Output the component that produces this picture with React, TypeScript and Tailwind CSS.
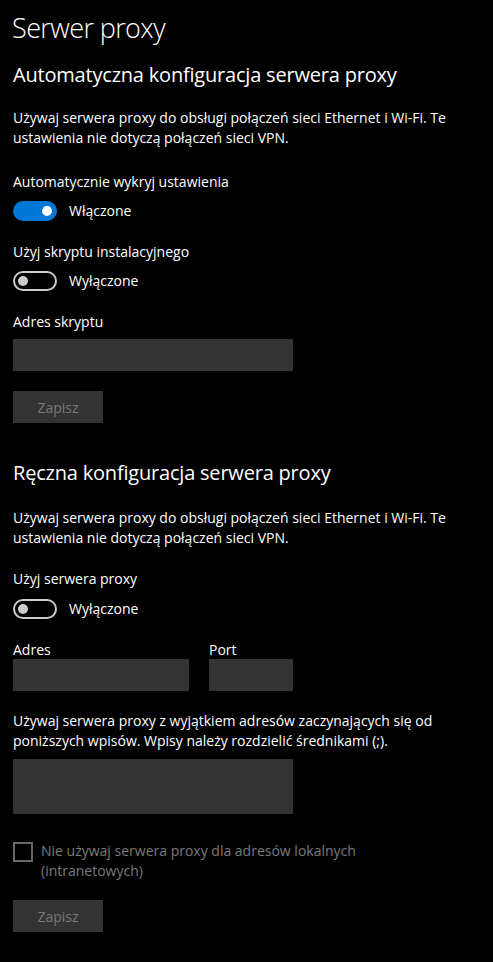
import React from 'react'

const font = { fontFamily: '"Open Sans", "Noto Sans", sans-serif' }

function Toggle({ on, label, className }: { on: boolean; label: string; className?: string }) {
    return (
        <div className={`flex items-center gap-3 h-5 ${className ?? ''}`}>
            {on ? (
                <div className="w-11 h-5 rounded-full bg-[#0078d7] flex items-center justify-end pr-[5px]">
                    <div className="w-[10px] h-[10px] rounded-full bg-white" />
                </div>
            ) : (
                <div className="w-11 h-5 rounded-full border-2 border-[#cccccc] flex items-center pl-[3px]">
                    <div className="w-[10px] h-[10px] rounded-full bg-[#cccccc]" />
                </div>
            )}
            <span className="text-[14px] leading-5 text-white">{label}</span>
        </div>
    )
}

function SaveButton({ className }: { className?: string }) {
    return (
        <div className={`w-[90px] h-8 bg-[#333333] flex items-center justify-center text-[14px] text-[#7a7a7a] ${className ?? ''}`}>
            Zapisz
        </div>
    )
}

export default function App() {
    return (
        <div className="w-[493px] h-[962px] bg-black text-white px-[13px] overflow-hidden" style={font}>
            <h1 className="pt-2 text-[27px] leading-10 font-light tracking-[-0.6px] -ml-px">Serwer proxy</h1>

            <h2 className="mt-[13px] text-[20px] leading-7 tracking-[-0.2px]">Automatyczna konfiguracja serwera proxy</h2>
            <p className="mt-[19px] text-[14px] leading-5 w-[460px]">
                Używaj serwera proxy do obsługi połączeń sieci Ethernet i Wi-Fi. Te ustawienia nie dotyczą połączeń sieci VPN.
            </p>

            <div className="mt-6 text-[14px] leading-5">Automatycznie wykryj ustawienia</div>
            <Toggle on label="Włączone" className="mt-[9px]" />

            <div className="mt-[21px] text-[14px] leading-5">Użyj skryptu instalacyjnego</div>
            <Toggle on={false} label="Wyłączone" className="mt-[9px]" />

            <div className="mt-[21px] text-[14px] leading-5">Adres skryptu</div>
            <div className="mt-[7px] w-[280px] h-8 bg-[#333333]" />
            <SaveButton className="mt-5" />

            <h2 className="mt-9 text-[20px] leading-7 tracking-[-0.2px]">Ręczna konfiguracja serwera proxy</h2>
            <p className="mt-[21px] text-[14px] leading-5 w-[460px]">
                Używaj serwera proxy do obsługi połączeń sieci Ethernet i Wi-Fi. Te ustawienia nie dotyczą połączeń sieci VPN.
            </p>

            <div className="mt-[21px] text-[14px] leading-5">Użyj serwera proxy</div>
            <Toggle on={false} label="Wyłączone" className="mt-[10px]" />

            <div className="mt-[22px] flex gap-5">
                <div className="flex flex-col">
                    <span className="text-[14px] leading-[18px]">Adres</span>
                    <div className="w-[176px] h-8 bg-[#333333]" />
                </div>
                <div className="flex flex-col">
                    <span className="text-[14px] leading-[18px]">Port</span>
                    <div className="w-[84px] h-8 bg-[#333333]" />
                </div>
            </div>

            <p className="mt-5 text-[14px] leading-5 w-[460px]">
                Używaj serwera proxy z wyjątkiem adresów zaczynających się od poniższych wpisów. Wpisy należy rozdzielić średnikami (;).
            </p>
            <div className="mt-2 w-[280px] h-[55px] bg-[#333333]" />

            <div className="mt-[27px] flex items-start gap-2">
                <div className="mt-px w-5 h-5 border-2 border-[#666666] shrink-0" />
                <span className="text-[14px] leading-5 text-[#7a7a7a] w-[380px]">
                    Nie używaj serwera proxy dla adresów lokalnych (intranetowych)
                </span>
            </div>

            <SaveButton className="mt-[19px]" />
        </div>
    )
}
